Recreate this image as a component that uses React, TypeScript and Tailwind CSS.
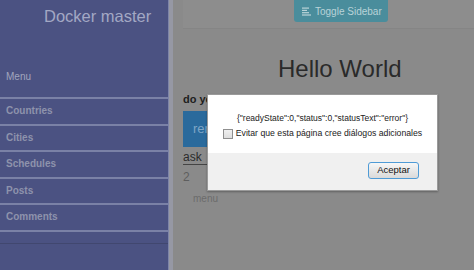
import React from "react";

const items = ["Countries", "Cities", "Schedules", "Posts", "Comments"];

export default function App() {
  return (
    <div
      className="relative flex h-[270px] w-[474px] overflow-hidden bg-[#8a8a8a]"
      style={{ fontFamily: '"Liberation Sans", Arial, sans-serif' }}
    >
      <aside className="flex h-full w-[169px] shrink-0 flex-col border-r border-[#7d84a8] bg-[#4b5282]">
        <div className="h-[52px] pl-[44px] pt-[5px] text-[16.5px] leading-[22px] text-[#a3a8c4]">Docker master</div>
        <div className="h-[45px] pl-[6px] pt-[19px] text-[10px] leading-[12px] text-[#a0a5bd]">Menu</div>
        <ul className="border-t-2 border-[#7a81a6]">
          {items.map((it) => (
            <li
              key={it}
              className="h-[26.6px] border-b-2 border-[#7a81a6] pl-[6px] pt-[6px] text-[10px] font-bold leading-[12px] text-[#8e93ac]"
            >
              {it}
            </li>
          ))}
        </ul>
        <div className="h-[12px] border-b border-[#41476f]" />
      </aside>
      <div className="w-[4px] shrink-0 bg-[#9698a4]" />
      <main className="flex min-w-0 flex-1 flex-col pl-[10px]">
        <div className="flex h-[29px] shrink-0 items-start border-b border-[#858585] bg-[#8d8d8d] pl-[111px]">
          <div className="flex h-[22px] w-[94px] items-center gap-[4px] rounded-b-[3px] bg-[#4a8d9c] pl-[8px] text-[10px] text-[#b9d3d8]">
            <svg width="9" height="9" viewBox="0 0 9 9" fill="#b9d3d8">
              <rect x="0" y="0.5" width="7" height="1.2" />
              <rect x="0" y="2.8" width="5" height="1.2" />
              <rect x="0" y="5.1" width="7" height="1.2" />
              <rect x="0" y="7.4" width="9" height="1.2" />
            </svg>
            <span>Toggle Sidebar</span>
          </div>
        </div>
        <div className="pl-[95px] pt-[26px] text-[24px] leading-[28px] text-[#2a2a2a]">Hello World</div>
        <div className="pt-[10px] text-[11px] font-bold leading-[13px] text-[#1e1e1e]">do yo</div>
        <div className="mt-[5px] flex h-[36px] w-[120px] items-center bg-[#2a6a9c] pl-[10px] text-[13px] text-[#7fa6c6]">rem</div>
        <div className="mt-[2px] w-[120px] border-b border-[#444] pt-[1px] text-[12px] leading-[14px] text-[#2c2c2c]">ask</div>
        <div className="pt-[5px] text-[12px] leading-[14px] text-[#5e5e5e]">2</div>
        <div className="pl-[10px] pt-[9px] text-[10px] leading-[12px] text-[#6c6c6c]">menu</div>
      </main>

      <div className="absolute left-[207px] top-[94px] flex h-[97px] w-[231px] flex-col border border-[#9a9a9a] bg-white shadow-[0_1px_2px_rgba(0,0,0,0.3)]">
        <div className="flex h-[58px] flex-col items-center pt-[18px]">
          <div className="whitespace-nowrap text-[8.5px] leading-[10px] text-[#222]">
            {'{"readyState":0,"status":0,"statusText":"error"}'}
          </div>
          <div className="mt-[5px] flex items-center gap-[3px] whitespace-nowrap text-[8.7px] leading-[11px] text-[#222]">
            <span className="inline-block h-[10px] w-[10px] border border-[#8f8f8f] bg-gradient-to-b from-[#f0f0f0] to-[#dedede]" />
            <span>Evitar que esta página cree diálogos adicionales</span>
          </div>
        </div>
        <div className="flex flex-1 items-start justify-end bg-[#f0f0f0] pr-[18px] pt-[9px]">
          <div className="flex h-[17px] w-[51px] items-center justify-center rounded-[3px] border border-[#4f9bd6] bg-gradient-to-b from-[#f7f7f7] to-[#dadada] text-[9.5px] text-[#111]">
            Aceptar
          </div>
        </div>
      </div>
    </div>
  );
}
